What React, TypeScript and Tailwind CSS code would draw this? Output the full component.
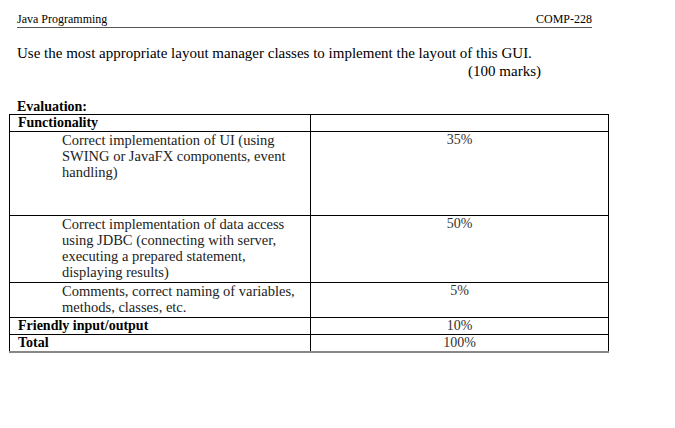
import React from 'react';

const serif = { fontFamily: '"Liberation Serif", "Times New Roman", serif' };

const rows = [
  { label: 'Functionality', bold: true, value: '', h: 'h-[17px]' },
  {
    label: 'Correct implementation of UI (using SWING or JavaFX components, event handling)',
    bold: false,
    value: '35%',
    h: 'h-[84px]',
  },
  {
    label:
      'Correct implementation of data access using JDBC (connecting with server, executing a prepared statement, displaying results)',
    bold: false,
    value: '50%',
    h: 'h-[67px]',
  },
  {
    label: 'Comments, correct naming of variables, methods, classes, etc.',
    bold: false,
    value: '5%',
    h: 'h-[35px]',
  },
  { label: 'Friendly input/output', bold: true, value: '10%', h: 'h-[16px]' },
  { label: 'Total', bold: true, value: '100%', h: 'h-[17px]' },
];

const App: React.FC = () => {
  return (
    <div className="w-[675px] h-[428px] bg-white text-black pl-[9px]" style={serif}>
      {/* Page header */}
      <div className="ml-2 w-[575px] pt-[12px] flex justify-between border-b border-[#555] text-[12px] leading-[14px] pb-[1px]">
        <span>Java Programming</span>
        <span>COMP-228</span>
      </div>

      {/* Task */}
      <div className="ml-2 mt-[16px] text-[15px] leading-[18px]">
        <p>Use the most appropriate layout manager classes to implement the layout of this GUI.</p>
        <p className="w-[524px] text-right">(100 marks)</p>
      </div>

      <h2 className="ml-2 mt-[20px] text-[14px] leading-[14px] font-bold">Evaluation:</h2>

      {/* Marking table */}
      <table className="border-collapse text-[14.5px] leading-[16px]">
        <tbody>
          {rows.map((r, i) => (
            <tr key={i} className={r.h}>
              <td
                className={`w-[301px] align-top border border-black p-0 ${
                  i === rows.length - 1 ? 'border-b-[#888] border-b-2' : ''
                }`}
              >
                {r.bold ? (
                  <div className="pl-2 font-bold text-[14px]">{r.label}</div>
                ) : (
                  <div className="pl-[52px] pr-2 text-[#222]">{r.label}</div>
                )}
              </td>
              <td
                className={`w-[298px] align-top border border-black p-0 text-center text-[14px] text-[#333] ${
                  i === rows.length - 1 ? 'border-b-[#888] border-b-2' : ''
                }`}
              >
                {r.value}
              </td>
            </tr>
          ))}
        </tbody>
      </table>
    </div>
  );
};

export default App;
